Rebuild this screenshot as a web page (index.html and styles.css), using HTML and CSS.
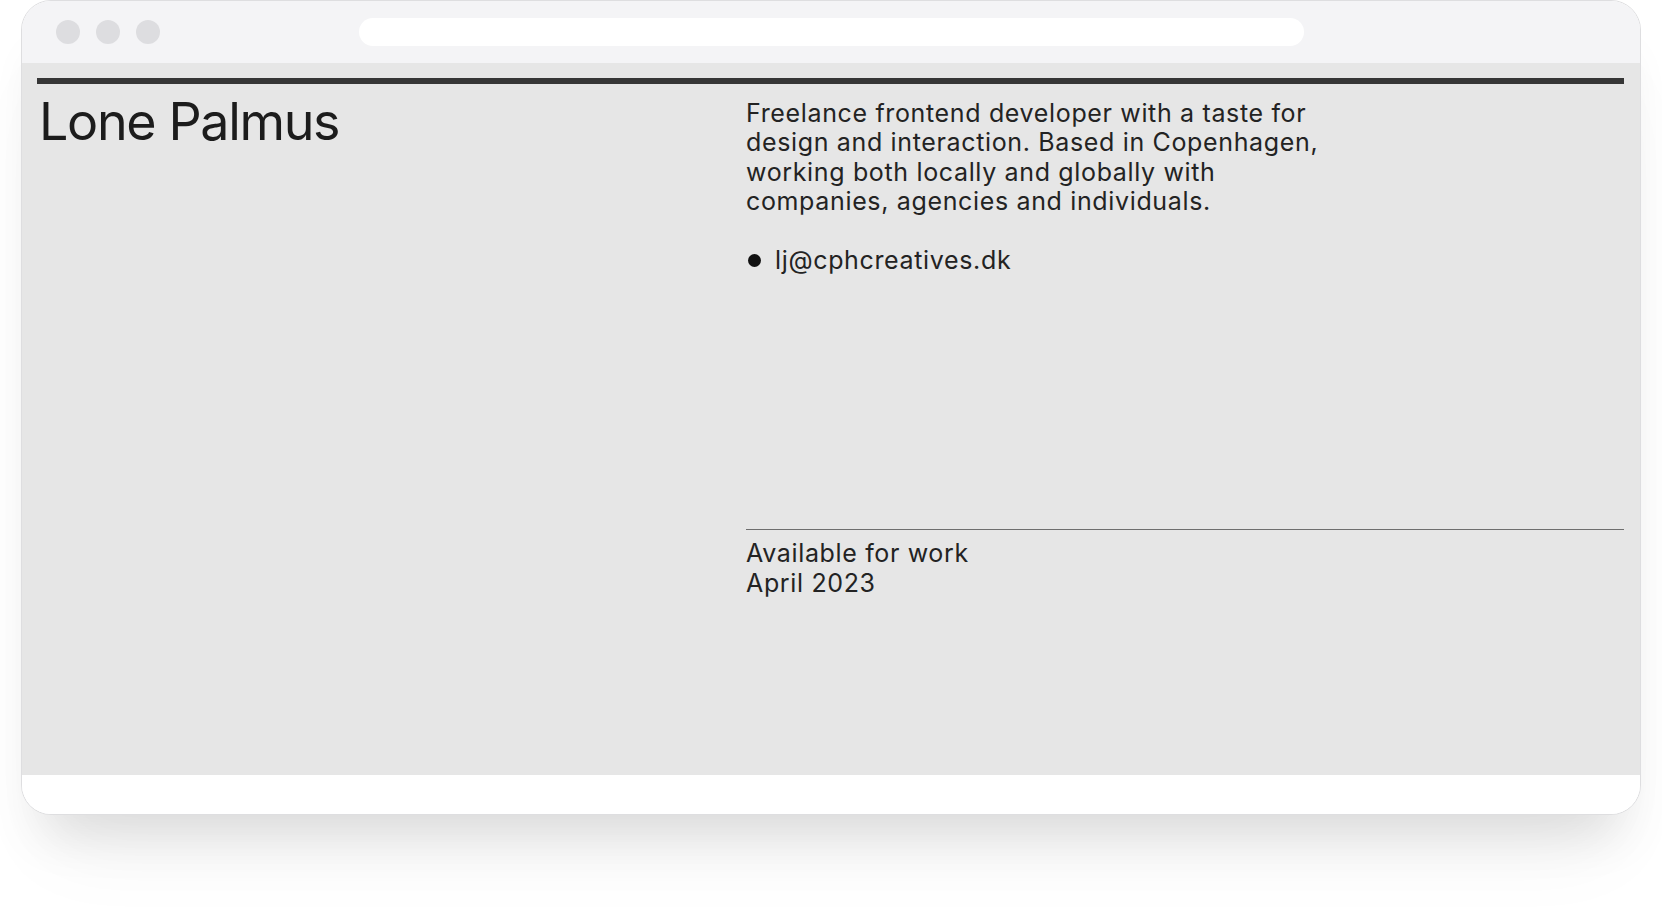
FILE: index.html
```html
<!DOCTYPE html>
<html lang="en">
<head>
<meta charset="utf-8">
<title>Lone Palmus</title>
<link rel="stylesheet" href="styles.css">
</head>
<body>
<div class="window">
  <div class="titlebar">
    <div class="dots"><span class="dot"></span><span class="dot"></span><span class="dot"></span></div>
    <div class="urlbar"></div>
    <div></div>
  </div>
  <main class="page">
    <div class="rule"></div>
    <div class="columns">
      <h1 class="name">Lone Palmus</h1>
      <div class="info">
        <p class="intro">Freelance frontend developer with a taste for design and interaction. Based in Copenhagen, working both locally and globally with companies, agencies and individuals.</p>
        <ul class="contact">
          <li><span class="bullet"></span>lj@cphcreatives.dk</li>
        </ul>
        <div class="availability">
          <div>Available for work</div>
          <div>April 2023</div>
        </div>
      </div>
    </div>
  </main>
  <div class="footer"></div>
</div>
</body>
</html>
```

FILE: styles.css
```css
html, body {
  margin: 0;
  padding: 0;
  background: #ffffff;
}

body {
  font-family: Inter, "Noto Sans", "Liberation Sans", sans-serif;
  color: #222222;
  height: 916px;
  overflow: hidden;
}

.window {
  margin-left: 21px;
  width: 1620px;
  box-sizing: border-box;
  border: 1px solid #dedee0;
  border-radius: 30px;
  overflow: hidden;
  background: #ffffff;
  box-shadow: 0 40px 50px -20px rgba(0, 0, 0, 0.10), 0 60px 80px -30px rgba(0, 0, 0, 0.06);
}

.titlebar {
  height: 62px;
  background: #f4f4f6;
  display: grid;
  grid-template-columns: 1fr 945px 1fr;
  align-items: center;
}

.dots {
  display: flex;
  gap: 16px;
  padding-left: 34px;
}

.dot {
  width: 24px;
  height: 24px;
  border-radius: 50%;
  background: #dddde0;
}

.urlbar {
  height: 28px;
  border-radius: 14px;
  background: #ffffff;
}

.page {
  background: #e6e6e6;
  height: 712px;
  box-sizing: border-box;
  padding: 15px 16px 0 15px;
}

.rule {
  height: 6px;
  background: #363636;
}

.columns {
  display: grid;
  grid-template-columns: 709px 1fr;
}

.name {
  margin: 12px 0 0 2px;
  font-size: 52px;
  line-height: 1;
  font-weight: 400;
  letter-spacing: -0.026em;
  color: #1c1c1c;
}

.info {
  padding-top: 15px;
  font-size: 25px;
  line-height: 29.3px;
  letter-spacing: 0.026em;
  color: #232323;
}

.intro {
  margin: 0 0 30px;
  max-width: 590px;
}

.contact {
  list-style: none;
  margin: 0;
  padding: 0;
}

.contact li {
  display: flex;
  align-items: center;
  gap: 14px;
}

.bullet {
  margin-left: 2px;
  width: 13px;
  height: 13px;
  border-radius: 50%;
  background: #111111;
}

.availability {
  margin-top: 254px;
  border-top: 1px solid #6e6e6e;
  padding-top: 9px;
}

.footer {
  height: 39px;
  background: #ffffff;
}
```
